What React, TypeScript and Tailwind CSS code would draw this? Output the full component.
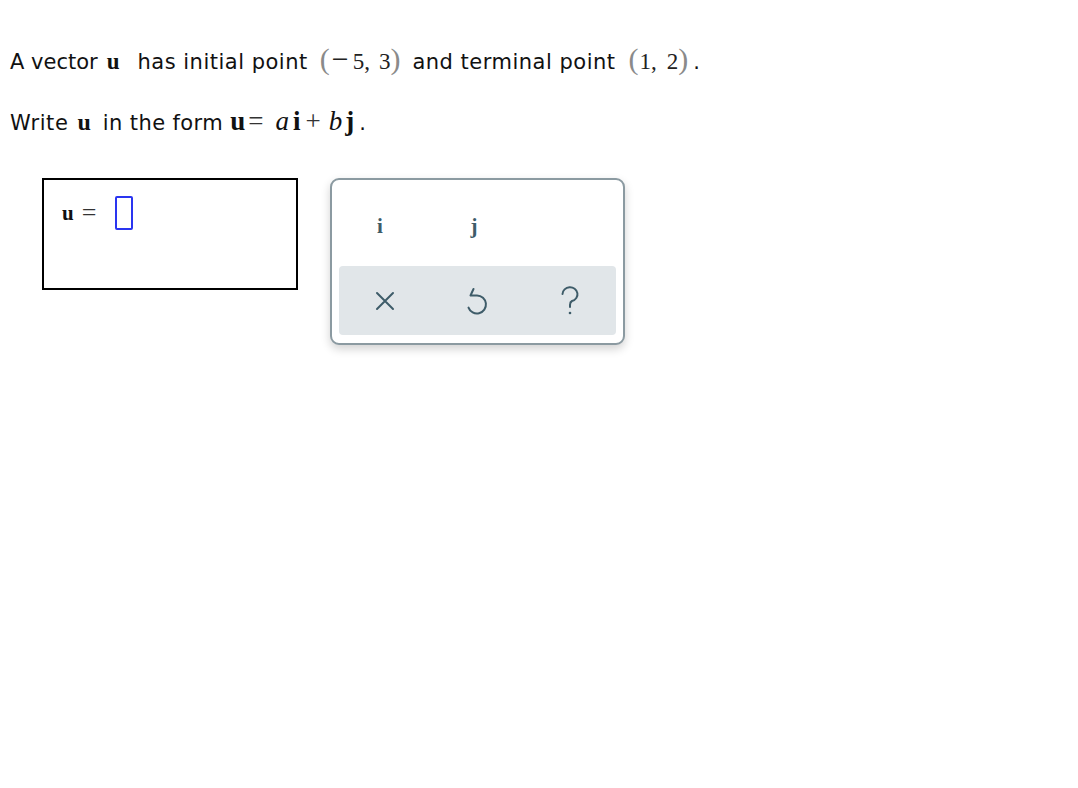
import React from "react";

const serif = { fontFamily: '"Liberation Serif", "Times New Roman", serif' };

function Paren({ children }: { children: React.ReactNode }) {
  return (
    <span className="inline-flex items-baseline tracking-normal" style={serif}>
      <span className="text-[30px] text-[#8a8a8a] leading-none">(</span>
      <span className="text-[23px] text-[#222] leading-none flex items-baseline">{children}</span>
      <span className="text-[30px] text-[#8a8a8a] leading-none">)</span>
    </span>
  );
}

export default function App() {
  return (
    <div className="min-h-[788px] w-[1078px] bg-white text-[#111]" style={{ fontFamily: '"DejaVu Sans", Verdana, sans-serif' }}>
      <div className="pl-[10px] pt-[44px] text-[21px] leading-[28px]">
        <p className="flex items-baseline">
          <span>A vector</span>
          <span className="ml-[9px] font-bold text-[23px]" style={serif}>u</span>
          <span className="ml-[18px] tracking-[0.5px]">has initial point</span>
          <span className="ml-[12px]">
            <Paren>
              <span className="ml-[2px] text-[30px] leading-none">−</span>
              <span className="ml-[4px]">5,</span>
              <span className="ml-[9px]">3</span>
            </Paren>
          </span>
          <span className="ml-[12px] tracking-[0.5px]">and terminal point</span>
          <span className="ml-[13px]">
            <Paren>
              <span className="ml-[1px]">1,</span>
              <span className="ml-[10px]">2</span>
            </Paren>
          </span>
          <span className="ml-[5px]">.</span>
        </p>
        <p className="mt-[31px] flex items-baseline">
          <span className="tracking-[0.6px]">Write</span>
          <span className="ml-[9px] font-bold text-[24px]" style={serif}>u</span>
          <span className="ml-[12px] tracking-[0.4px]">in the form</span>
          <span className="ml-[7px] text-[27px] flex items-baseline" style={serif}>
            <b>u</b>
            <span className="ml-[3px] text-[#333]">=</span>
            <i className="ml-[12px]">a</i>
            <b className="ml-[4px]">i</b>
            <span className="ml-[5px] text-[#333]">+</span>
            <i className="ml-[8px]">b</i>
            <b className="ml-[3px]">j</b>
          </span>
          <span className="ml-[5px]">.</span>
        </p>
      </div>
      <div className="mt-[41px] ml-[42px] flex items-start gap-[32px]">
        <div className="w-[256px] h-[112px] border-2 border-black pl-[18px] pt-[16px]">
          <div className="flex items-center" style={serif}>
            <span className="font-bold text-[21px] leading-none">u</span>
            <span className="ml-[8px] text-[26px] text-[#333] leading-none">=</span>
            <span className="ml-[19px] inline-block w-[18px] h-[34px] border-2 border-[#2a35f0] rounded-[2px]"></span>
          </div>
        </div>
        <div className="w-[295px] h-[167px] rounded-[9px] border-2 border-[#8b9aa1] bg-white shadow-[0_4px_10px_rgba(0,0,0,0.18)] px-[7px] pt-[7px]">
          <div className="h-[79px] flex items-center gap-[16px] pl-[2px] text-[#3e5c69] font-bold text-[21px]" style={serif}>
            <span className="w-[78px] text-center">i</span>
            <span className="w-[78px] text-center">j</span>
          </div>
          <div className="h-[69px] rounded-[4px] bg-[#e1e6e9] grid grid-cols-3 items-center text-[#3e5c69]">
            <div className="flex justify-center">
              <svg width="20" height="20" viewBox="0 0 20 20" fill="none" stroke="currentColor" strokeWidth="2" strokeLinecap="round">
                <path d="M2 2 L18 18 M18 2 L2 18" />
              </svg>
            </div>
            <div className="flex justify-center">
              <svg width="24" height="30" viewBox="0 0 24 30" fill="none" stroke="currentColor" strokeWidth="2" strokeLinecap="round" strokeLinejoin="round">
                <path d="M8.5 3 L5.5 9.5 L12 9.5 A9 9 0 1 1 3.5 21.6" />
              </svg>
            </div>
            <div className="flex justify-center">
              <svg width="20" height="30" viewBox="0 0 20 30" fill="none" stroke="currentColor" strokeWidth="2" strokeLinecap="round">
                <path d="M2.5 8 A7.5 7 0 1 1 12 15 Q10 16 10 19 L10 21" />
                <circle cx="10" cy="27" r="1.3" fill="currentColor" stroke="none" />
              </svg>
            </div>
          </div>
        </div>
      </div>
    </div>
  );
}
